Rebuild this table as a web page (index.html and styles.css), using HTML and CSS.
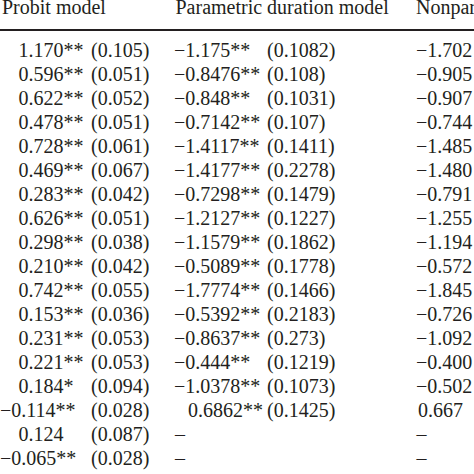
FILE: index.html
```html
<!DOCTYPE html>
<html>
	<head>
		<meta charset="utf-8">
		<title>Estimates</title>
		<link rel="stylesheet" href="styles.css">
	</head>
	<body>
		<div class="tbl">
			<div class="head">
				<div class="h1">Probit model</div>
				<div class="h2">Parametric duration model</div>
				<div class="h3">Nonparametric duration model</div>
			</div>
			<div class="rows">
				<div class="row"><span class="pos">1.170**</span><span>(0.105)</span><span>−1.175**</span><span>(0.1082)</span><span>−1.702</span></div>
				<div class="row"><span class="pos">0.596**</span><span>(0.051)</span><span>−0.8476**</span><span>(0.108)</span><span>−0.905</span></div>
				<div class="row"><span class="pos">0.622**</span><span>(0.052)</span><span>−0.848**</span><span>(0.1031)</span><span>−0.907</span></div>
				<div class="row"><span class="pos">0.478**</span><span>(0.051)</span><span>−0.7142**</span><span>(0.107)</span><span>−0.744</span></div>
				<div class="row"><span class="pos">0.728**</span><span>(0.061)</span><span>−1.4117**</span><span>(0.1411)</span><span>−1.485</span></div>
				<div class="row"><span class="pos">0.469**</span><span>(0.067)</span><span>−1.4177**</span><span>(0.2278)</span><span>−1.480</span></div>
				<div class="row"><span class="pos">0.283**</span><span>(0.042)</span><span>−0.7298**</span><span>(0.1479)</span><span>−0.791</span></div>
				<div class="row"><span class="pos">0.626**</span><span>(0.051)</span><span>−1.2127**</span><span>(0.1227)</span><span>−1.255</span></div>
				<div class="row"><span class="pos">0.298**</span><span>(0.038)</span><span>−1.1579**</span><span>(0.1862)</span><span>−1.194</span></div>
				<div class="row"><span class="pos">0.210**</span><span>(0.042)</span><span>−0.5089**</span><span>(0.1778)</span><span>−0.572</span></div>
				<div class="row"><span class="pos">0.742**</span><span>(0.055)</span><span>−1.7774**</span><span>(0.1466)</span><span>−1.845</span></div>
				<div class="row"><span class="pos">0.153**</span><span>(0.036)</span><span>−0.5392**</span><span>(0.2183)</span><span>−0.726</span></div>
				<div class="row"><span class="pos">0.231**</span><span>(0.053)</span><span>−0.8637**</span><span>(0.273)</span><span>−1.092</span></div>
				<div class="row"><span class="pos">0.221**</span><span>(0.053)</span><span>−0.444**</span><span>(0.1219)</span><span>−0.400</span></div>
				<div class="row"><span class="pos">0.184*</span><span>(0.094)</span><span>−1.0378**</span><span>(0.1073)</span><span>−0.502</span></div>
				<div class="row"><span class="neg">−0.114**</span><span>(0.028)</span><span class="pos2">0.6862**</span><span>(0.1425)</span><span class="pos3">0.667</span></div>
				<div class="row"><span class="pos">0.124</span><span>(0.087)</span><span class="dash">–</span><span></span><span class="dash3">–</span></div>
				<div class="row"><span class="neg">−0.065**</span><span>(0.028)</span><span class="dash">–</span><span></span><span class="dash3">–</span></div>
			</div>
		</div>
	</body>
</html>
```

FILE: styles.css
```css
body,html{
	margin: 0;
	background: #fff;
	overflow: hidden;
}
.tbl{
	width: 474px;
	margin-top: -5.5px;
	overflow: hidden;
	font: 20px/24px "Liberation Serif", "Times New Roman", serif;
	color: #231f20;
	white-space: nowrap;
}
.head{
	display: grid;
	grid-template-columns: 174px 242px 200px;
	padding-bottom: 10.5px;
	border-bottom: 2px solid #231f20;
}
.head .h1{
	padding-left: 2px;
}
.head .h2{
	padding-left: 1.5px;
}
.rows{
	padding-top: 7px;
}
.row{
	display: grid;
	grid-template-columns: 91px 83px 93px 149px 200px;
	height: 24px;
}
.row .pos{
	padding-left: 18.5px;
}
.row .pos2{
	padding-left: 14px;
}
.row .pos3{
	padding-left: 2px;
}
.row .dash{
	padding-left: 1px;
}
.row .dash3{
	padding-left: 0.5px;
}
```
